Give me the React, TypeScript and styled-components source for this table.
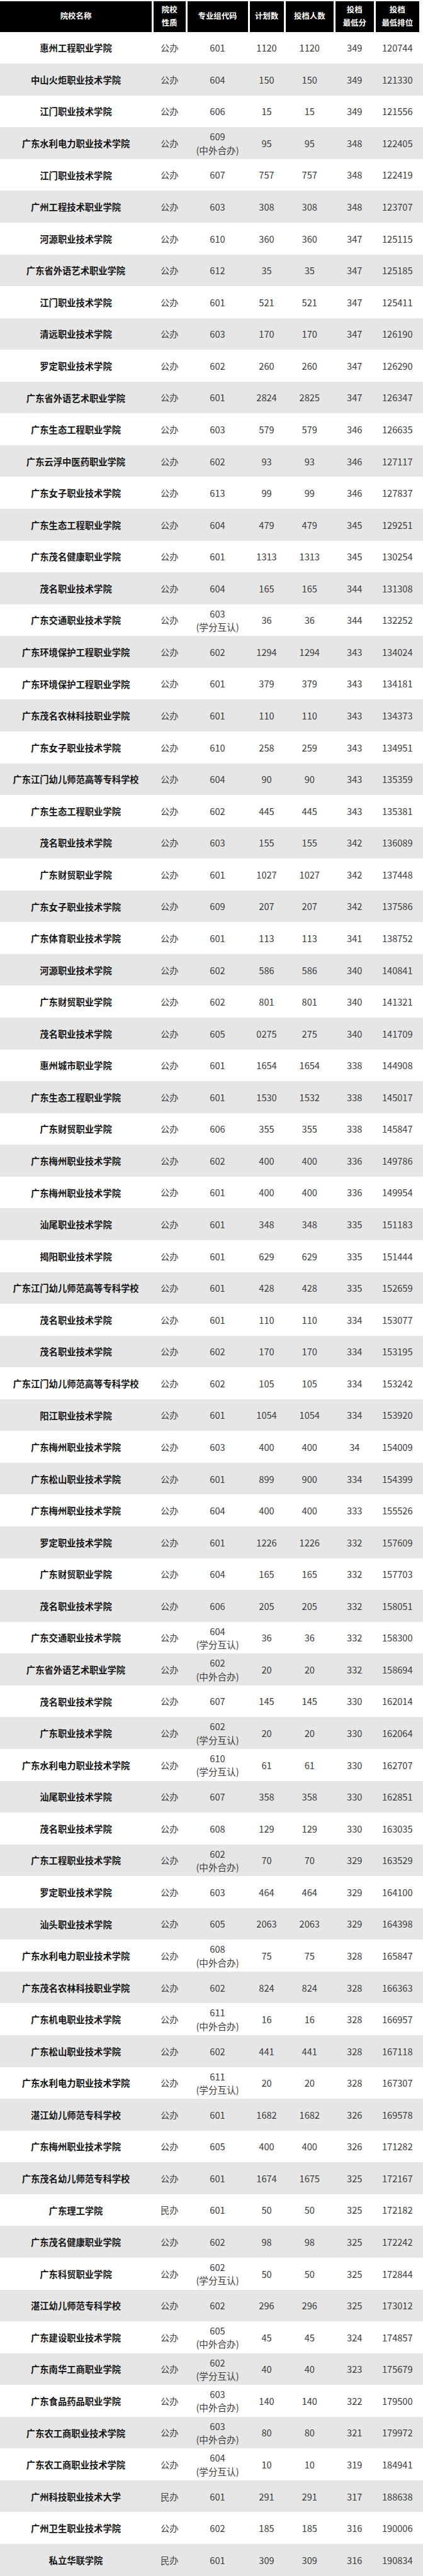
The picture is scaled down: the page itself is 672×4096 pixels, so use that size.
import React from "react";
import styled, { createGlobalStyle } from "styled-components";

const GlobalStyle = createGlobalStyle`
  html, body {
    margin: 0;
    padding: 0;
    background: #ffffff;
  }
  body {
    font-family: "Noto Sans CJK SC", "Microsoft YaHei", "Noto Sans", sans-serif;
  }
`;

const COLS = "241px 50.5px 96px 54px 76.5px 60.5px 69.5px";
const ROW_H = "calc(4096px / 81)";

const Table = styled.div`
  width: 672px;
  display: flex;
  flex-direction: column;
`;

const HeaderRow = styled.div`
  display: grid;
  grid-template-columns: ${COLS};
  column-gap: 3px;
  height: ${ROW_H};
  padding-top: 1.5px;
  box-sizing: border-box;
  background: #ffffff;
`;

const HeaderCell = styled.div`
  background: #000000;
  color: #ffffff;
  display: flex;
  align-items: center;
  justify-content: center;
  text-align: center;
  font-family: "Noto Sans CJK SC", sans-serif;
  font-weight: 700;
  font-size: 12.4px;
  line-height: 21.3px;
  white-space: pre-line;
`;

const Row = styled.div<{ $alt: boolean }>`
  display: grid;
  grid-template-columns: ${COLS};
  column-gap: 3px;
  height: ${ROW_H};
  background: ${(p) => (p.$alt ? "#e6e6e6" : "#ffffff")};
`;

const NameCell = styled.div`
  display: flex;
  align-items: center;
  justify-content: center;
  font-family: "Noto Sans CJK SC", sans-serif;
  font-weight: 700;
  font-size: 14.3px;
  color: #161616;
  white-space: nowrap;
`;

const Cell = styled.div`
  display: flex;
  flex-direction: column;
  align-items: center;
  justify-content: center;
  font-family: "Noto Sans CJK SC", sans-serif;
  font-weight: 400;
  font-size: 14.6px;
  line-height: 21.3px;
  color: #3a3a3a;
  white-space: nowrap;
`;

const TypeCell = styled(Cell)`
  font-size: 14.3px;
  color: #444444;
`;

type R = [string, string, string, string, string, string, string, string];

const G = "公办";
const M = "民办";
const ZW = "(中外合办)";
const XF = "(学分互认)";

const rows: R[] = [
  ["惠州工程职业学院", G, "601", "", "1120", "1120", "349", "120744"],
  ["中山火炬职业技术学院", G, "604", "", "150", "150", "349", "121330"],
  ["江门职业技术学院", G, "606", "", "15", "15", "349", "121556"],
  ["广东水利电力职业技术学院", G, "609", ZW, "95", "95", "348", "122405"],
  ["江门职业技术学院", G, "607", "", "757", "757", "348", "122419"],
  ["广州工程技术职业学院", G, "603", "", "308", "308", "348", "123707"],
  ["河源职业技术学院", G, "610", "", "360", "360", "347", "125115"],
  ["广东省外语艺术职业学院", G, "612", "", "35", "35", "347", "125185"],
  ["江门职业技术学院", G, "601", "", "521", "521", "347", "125411"],
  ["清远职业技术学院", G, "603", "", "170", "170", "347", "126190"],
  ["罗定职业技术学院", G, "602", "", "260", "260", "347", "126290"],
  ["广东省外语艺术职业学院", G, "601", "", "2824", "2825", "347", "126347"],
  ["广东生态工程职业学院", G, "603", "", "579", "579", "346", "126635"],
  ["广东云浮中医药职业学院", G, "602", "", "93", "93", "346", "127117"],
  ["广东女子职业技术学院", G, "613", "", "99", "99", "346", "127837"],
  ["广东生态工程职业学院", G, "604", "", "479", "479", "345", "129251"],
  ["广东茂名健康职业学院", G, "601", "", "1313", "1313", "345", "130254"],
  ["茂名职业技术学院", G, "604", "", "165", "165", "344", "131308"],
  ["广东交通职业技术学院", G, "603", XF, "36", "36", "344", "132252"],
  ["广东环境保护工程职业学院", G, "602", "", "1294", "1294", "343", "134024"],
  ["广东环境保护工程职业学院", G, "601", "", "379", "379", "343", "134181"],
  ["广东茂名农林科技职业学院", G, "601", "", "110", "110", "343", "134373"],
  ["广东女子职业技术学院", G, "610", "", "258", "259", "343", "134951"],
  ["广东江门幼儿师范高等专科学校", G, "604", "", "90", "90", "343", "135359"],
  ["广东生态工程职业学院", G, "602", "", "445", "445", "343", "135381"],
  ["茂名职业技术学院", G, "603", "", "155", "155", "342", "136089"],
  ["广东财贸职业学院", G, "601", "", "1027", "1027", "342", "137448"],
  ["广东女子职业技术学院", G, "609", "", "207", "207", "342", "137586"],
  ["广东体育职业技术学院", G, "601", "", "113", "113", "341", "138752"],
  ["河源职业技术学院", G, "602", "", "586", "586", "340", "140841"],
  ["广东财贸职业学院", G, "602", "", "801", "801", "340", "141321"],
  ["茂名职业技术学院", G, "605", "", "0275", "275", "340", "141709"],
  ["惠州城市职业学院", G, "601", "", "1654", "1654", "338", "144908"],
  ["广东生态工程职业学院", G, "601", "", "1530", "1532", "338", "145017"],
  ["广东财贸职业学院", G, "606", "", "355", "355", "338", "145847"],
  ["广东梅州职业技术学院", G, "602", "", "400", "400", "336", "149786"],
  ["广东梅州职业技术学院", G, "601", "", "400", "400", "336", "149954"],
  ["汕尾职业技术学院", G, "601", "", "348", "348", "335", "151183"],
  ["揭阳职业技术学院", G, "601", "", "629", "629", "335", "151444"],
  ["广东江门幼儿师范高等专科学校", G, "601", "", "428", "428", "335", "152659"],
  ["茂名职业技术学院", G, "601", "", "110", "110", "334", "153077"],
  ["茂名职业技术学院", G, "602", "", "170", "170", "334", "153195"],
  ["广东江门幼儿师范高等专科学校", G, "602", "", "105", "105", "334", "153242"],
  ["阳江职业技术学院", G, "601", "", "1054", "1054", "334", "153920"],
  ["广东梅州职业技术学院", G, "603", "", "400", "400", "34", "154009"],
  ["广东松山职业技术学院", G, "601", "", "899", "900", "334", "154399"],
  ["广东梅州职业技术学院", G, "604", "", "400", "400", "333", "155526"],
  ["罗定职业技术学院", G, "601", "", "1226", "1226", "332", "157609"],
  ["广东财贸职业学院", G, "604", "", "165", "165", "332", "157703"],
  ["茂名职业技术学院", G, "606", "", "205", "205", "332", "158051"],
  ["广东交通职业技术学院", G, "604", XF, "36", "36", "332", "158300"],
  ["广东省外语艺术职业学院", G, "602", ZW, "20", "20", "332", "158694"],
  ["茂名职业技术学院", G, "607", "", "145", "145", "330", "162014"],
  ["广东职业技术学院", G, "602", XF, "20", "20", "330", "162064"],
  ["广东水利电力职业技术学院", G, "610", XF, "61", "61", "330", "162707"],
  ["汕尾职业技术学院", G, "607", "", "358", "358", "330", "162851"],
  ["茂名职业技术学院", G, "608", "", "129", "129", "330", "163035"],
  ["广东工程职业技术学院", G, "602", ZW, "70", "70", "329", "163529"],
  ["罗定职业技术学院", G, "603", "", "464", "464", "329", "164100"],
  ["汕头职业技术学院", G, "605", "", "2063", "2063", "329", "164398"],
  ["广东水利电力职业技术学院", G, "608", ZW, "75", "75", "328", "165847"],
  ["广东茂名农林科技职业学院", G, "602", "", "824", "824", "328", "166363"],
  ["广东机电职业技术学院", G, "611", ZW, "16", "16", "328", "166957"],
  ["广东松山职业技术学院", G, "602", "", "441", "441", "328", "167118"],
  ["广东水利电力职业技术学院", G, "611", XF, "20", "20", "328", "167307"],
  ["湛江幼儿师范专科学校", G, "601", "", "1682", "1682", "326", "169578"],
  ["广东梅州职业技术学院", G, "605", "", "400", "400", "326", "171282"],
  ["广东茂名幼儿师范专科学校", G, "601", "", "1674", "1675", "325", "172167"],
  ["广东理工学院", M, "601", "", "50", "50", "325", "172182"],
  ["广东茂名健康职业学院", G, "602", "", "98", "98", "325", "172242"],
  ["广东科贸职业学院", G, "602", XF, "50", "50", "325", "172844"],
  ["湛江幼儿师范专科学校", G, "602", "", "296", "296", "325", "173012"],
  ["广东建设职业技术学院", G, "605", ZW, "45", "45", "324", "174857"],
  ["广东南华工商职业学院", G, "602", XF, "40", "40", "323", "175679"],
  ["广东食品药品职业学院", G, "603", ZW, "140", "140", "322", "179500"],
  ["广东农工商职业技术学院", G, "603", ZW, "80", "80", "321", "179972"],
  ["广东农工商职业技术学院", G, "604", XF, "10", "10", "319", "184941"],
  ["广州科技职业技术大学", M, "601", "", "291", "291", "317", "188638"],
  ["广州卫生职业技术学院", G, "602", "", "185", "185", "316", "190006"],
  ["私立华联学院", M, "601", "", "309", "309", "316", "190834"],
];

const headers = [
  "院校名称",
  "院校\n性质",
  "专业组代码",
  "计划数",
  "投档人数",
  "投档\n最低分",
  "投档\n最低排位",
];

export default function App() {
  return (
    <>
      <GlobalStyle />
      <Table>
        <HeaderRow>
          {headers.map((h) => (
            <HeaderCell key={h}>{h}</HeaderCell>
          ))}
        </HeaderRow>
        {rows.map((r, i) => (
          <Row key={i} $alt={i % 2 === 1}>
            <NameCell>{r[0]}</NameCell>
            <TypeCell>{r[1]}</TypeCell>
            <Cell>
              <span>{r[2]}</span>
              {r[3] && <span>{r[3]}</span>}
            </Cell>
            <Cell>{r[4]}</Cell>
            <Cell>{r[5]}</Cell>
            <Cell>{r[6]}</Cell>
            <Cell>{r[7]}</Cell>
          </Row>
        ))}
      </Table>
    </>
  );
}
